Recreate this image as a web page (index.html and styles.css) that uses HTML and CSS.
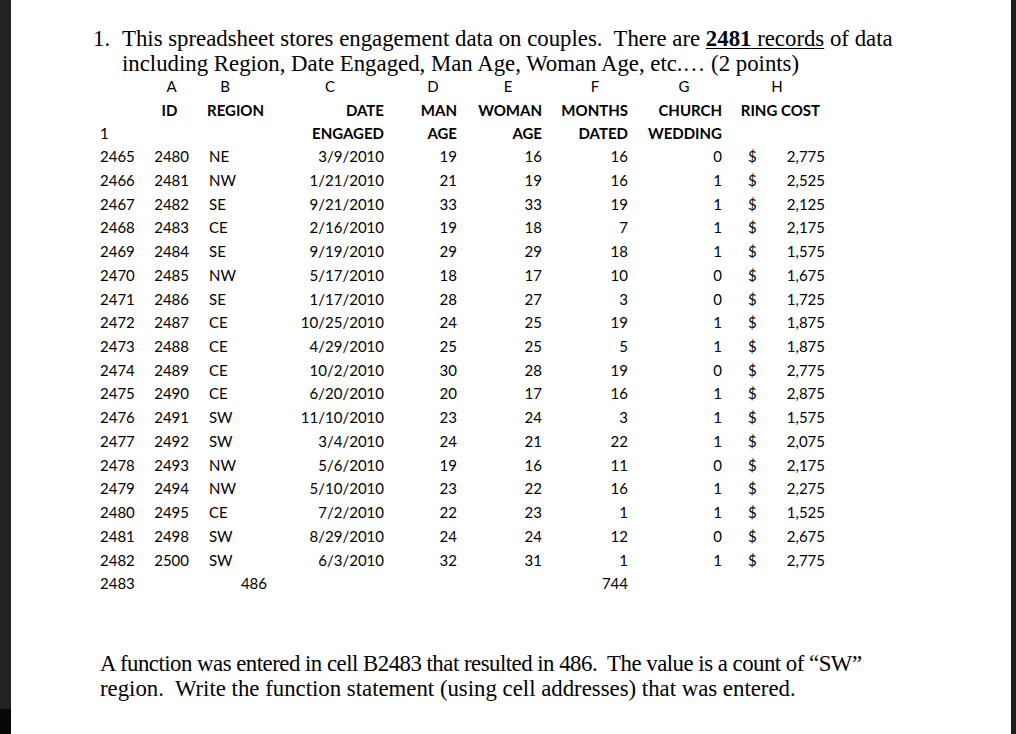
FILE: index.html
```html
<!DOCTYPE html>
<html>
<head>
<meta charset="utf-8">
<link rel="stylesheet" href="styles.css">
</head>
<body>
<div class="frame">
  <div class="edge-left"><div class="edge-top"></div><div class="edge-bottom"></div></div>
  <div class="page">
    <div class="q">
      <span class="q-num">1.</span>
      <span class="q-text">This spreadsheet stores engagement data on couples.&nbsp; There are <u><b>2481</b> records</u> of data<br>including Region, Date Engaged, Man Age, Woman Age, etc.… (2 points)</span>
    </div>
    <div class="sheet">
      <div class="row letters">
        <span></span><span>A</span><span>B</span><span>C</span><span>D</span><span>E</span><span>F</span><span>G</span><span>H</span>
      </div>
      <div class="row hdr hdr-1">
        <span></span><span class="c">ID</span><span class="reg">REGION</span><span class="r">DATE</span><span class="r">MAN</span><span class="r">WOMAN</span><span class="r">MONTHS</span><span class="r">CHURCH</span><span class="r cost-h">RING COST</span>
      </div>
      <div class="row hdr hdr-2">
        <span class="rn">1</span><span></span><span></span><span class="r">ENGAGED</span><span class="r">AGE</span><span class="r">AGE</span><span class="r">DATED</span><span class="r">WEDDING</span><span></span>
      </div>
      <div class="row"><span class="rn">2465</span><span class="r">2480</span><span class="reg">NE</span><span class="r">3/9/2010</span><span class="r">19</span><span class="r">16</span><span class="r">16</span><span class="r">0</span><span class="cost"><span>$</span><span>2,775</span></span></div>
      <div class="row"><span class="rn">2466</span><span class="r">2481</span><span class="reg">NW</span><span class="r">1/21/2010</span><span class="r">21</span><span class="r">19</span><span class="r">16</span><span class="r">1</span><span class="cost"><span>$</span><span>2,525</span></span></div>
      <div class="row"><span class="rn">2467</span><span class="r">2482</span><span class="reg">SE</span><span class="r">9/21/2010</span><span class="r">33</span><span class="r">33</span><span class="r">19</span><span class="r">1</span><span class="cost"><span>$</span><span>2,125</span></span></div>
      <div class="row"><span class="rn">2468</span><span class="r">2483</span><span class="reg">CE</span><span class="r">2/16/2010</span><span class="r">19</span><span class="r">18</span><span class="r">7</span><span class="r">1</span><span class="cost"><span>$</span><span>2,175</span></span></div>
      <div class="row"><span class="rn">2469</span><span class="r">2484</span><span class="reg">SE</span><span class="r">9/19/2010</span><span class="r">29</span><span class="r">29</span><span class="r">18</span><span class="r">1</span><span class="cost"><span>$</span><span>1,575</span></span></div>
      <div class="row"><span class="rn">2470</span><span class="r">2485</span><span class="reg">NW</span><span class="r">5/17/2010</span><span class="r">18</span><span class="r">17</span><span class="r">10</span><span class="r">0</span><span class="cost"><span>$</span><span>1,675</span></span></div>
      <div class="row"><span class="rn">2471</span><span class="r">2486</span><span class="reg">SE</span><span class="r">1/17/2010</span><span class="r">28</span><span class="r">27</span><span class="r">3</span><span class="r">0</span><span class="cost"><span>$</span><span>1,725</span></span></div>
      <div class="row"><span class="rn">2472</span><span class="r">2487</span><span class="reg">CE</span><span class="r">10/25/2010</span><span class="r">24</span><span class="r">25</span><span class="r">19</span><span class="r">1</span><span class="cost"><span>$</span><span>1,875</span></span></div>
      <div class="row"><span class="rn">2473</span><span class="r">2488</span><span class="reg">CE</span><span class="r">4/29/2010</span><span class="r">25</span><span class="r">25</span><span class="r">5</span><span class="r">1</span><span class="cost"><span>$</span><span>1,875</span></span></div>
      <div class="row"><span class="rn">2474</span><span class="r">2489</span><span class="reg">CE</span><span class="r">10/2/2010</span><span class="r">30</span><span class="r">28</span><span class="r">19</span><span class="r">0</span><span class="cost"><span>$</span><span>2,775</span></span></div>
      <div class="row"><span class="rn">2475</span><span class="r">2490</span><span class="reg">CE</span><span class="r">6/20/2010</span><span class="r">20</span><span class="r">17</span><span class="r">16</span><span class="r">1</span><span class="cost"><span>$</span><span>2,875</span></span></div>
      <div class="row"><span class="rn">2476</span><span class="r">2491</span><span class="reg">SW</span><span class="r">11/10/2010</span><span class="r">23</span><span class="r">24</span><span class="r">3</span><span class="r">1</span><span class="cost"><span>$</span><span>1,575</span></span></div>
      <div class="row"><span class="rn">2477</span><span class="r">2492</span><span class="reg">SW</span><span class="r">3/4/2010</span><span class="r">24</span><span class="r">21</span><span class="r">22</span><span class="r">1</span><span class="cost"><span>$</span><span>2,075</span></span></div>
      <div class="row"><span class="rn">2478</span><span class="r">2493</span><span class="reg">NW</span><span class="r">5/6/2010</span><span class="r">19</span><span class="r">16</span><span class="r">11</span><span class="r">0</span><span class="cost"><span>$</span><span>2,175</span></span></div>
      <div class="row"><span class="rn">2479</span><span class="r">2494</span><span class="reg">NW</span><span class="r">5/10/2010</span><span class="r">23</span><span class="r">22</span><span class="r">16</span><span class="r">1</span><span class="cost"><span>$</span><span>2,275</span></span></div>
      <div class="row"><span class="rn">2480</span><span class="r">2495</span><span class="reg">CE</span><span class="r">7/2/2010</span><span class="r">22</span><span class="r">23</span><span class="r">1</span><span class="r">1</span><span class="cost"><span>$</span><span>1,525</span></span></div>
      <div class="row"><span class="rn">2481</span><span class="r">2498</span><span class="reg">SW</span><span class="r">8/29/2010</span><span class="r">24</span><span class="r">24</span><span class="r">12</span><span class="r">0</span><span class="cost"><span>$</span><span>2,675</span></span></div>
      <div class="row"><span class="rn">2482</span><span class="r">2500</span><span class="reg">SW</span><span class="r">6/3/2010</span><span class="r">32</span><span class="r">31</span><span class="r">1</span><span class="r">1</span><span class="cost"><span>$</span><span>2,775</span></span></div>
      <div class="row"><span class="rn">2483</span><span></span><span class="r">486</span><span></span><span></span><span></span><span class="r">744</span><span></span><span></span></div>
    </div>
    <p class="ask"><span class="ask-line1">A function was entered in cell B2483 that resulted in 486.&nbsp; The value is a count of “SW”</span><br>region.&nbsp; Write the function statement (using cell addresses) that was entered.</p>
  </div>
  <div class="edge-right"></div>
</div>
</body>
</html>
```
FILE: styles.css
```css
html, body {
  margin: 0;
  padding: 0;
  background: #ffffff;
}

body {
  font-family: "Liberation Serif", "Times New Roman", serif;
  color: #000;
}

.frame {
  display: flex;
  height: 734px;
  overflow: hidden;
}

.edge-left {
  width: 11px;
  flex: 0 0 11px;
  display: flex;
  flex-direction: column;
}

.edge-top {
  flex: 0 0 709px;
  background: #222222;
}

.edge-bottom {
  flex: 1;
  background: #060606;
}

.edge-right {
  width: 5px;
  flex: 0 0 5px;
  background: #1e1e1e;
}

.page {
  flex: 1;
  padding-left: 82px;
}

.q {
  display: flex;
  margin-top: 27px;
  font-size: 22.8px;
  line-height: 24.5px;
  white-space: nowrap;
}

.q-num {
  width: 29px;
  flex: 0 0 29px;
}

.q u {
  text-decoration-thickness: 1px;
  text-underline-offset: 2px;
}

.sheet {
  margin-left: 7px;
  margin-top: -1.6px;
  font-family: Lato, "Open Sans", sans-serif;
  font-size: 15px;
  color: #000;
}

.row {
  display: grid;
  grid-template-columns: 50px 39px 78px 117px 73px 85px 86px 94px 103px;
  height: 23.72px;
  line-height: 23.72px;
  white-space: nowrap;
}

.row.letters {
  grid-template-columns: 50px 43px 64px 146px 60px 90px 84px 94px 92px;
  text-align: center;
  height: 24.5px;
  line-height: 24.5px;
}

.row.hdr {
  font-weight: bold;
}

.row.hdr-1 {
  height: 23.5px;
  line-height: 23.5px;
}

.row.hdr-2 {
  height: 22.9px;
  line-height: 22.9px;
}

.row.hdr .rn {
  font-weight: normal;
}

.r {
  text-align: right;
}

.c {
  text-align: center;
}

.reg {
  padding-left: 20px;
}

.hdr .reg {
  padding-left: 18px;
}

.cost-h {
  padding-right: 5px;
}

.cost {
  display: flex;
  justify-content: space-between;
  padding-left: 26px;
}

.ask {
  margin: 55px 0 0 7px;
  font-size: 22.8px;
  line-height: 25px;
  white-space: nowrap;
}

.ask-line1 {
  letter-spacing: -0.5px;
}
```
